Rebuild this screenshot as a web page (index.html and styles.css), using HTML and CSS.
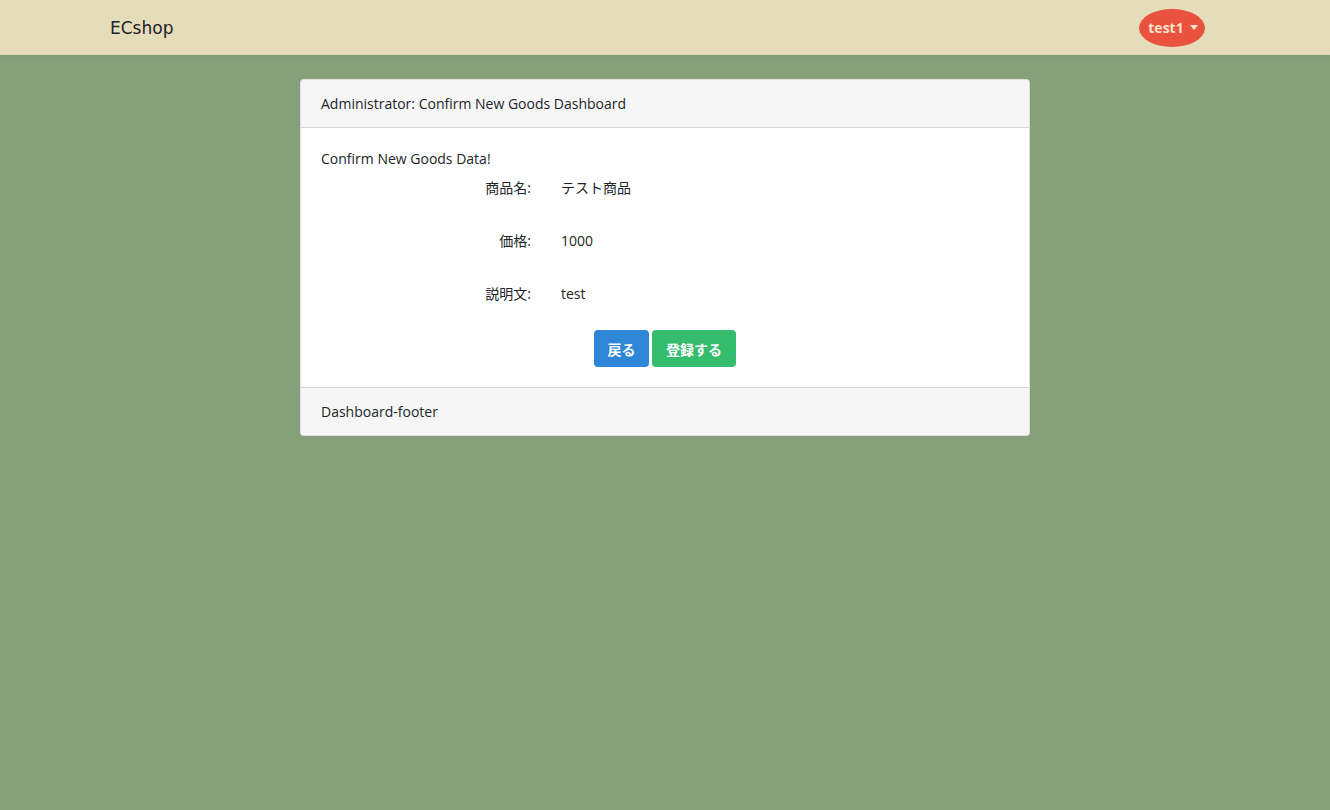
FILE: index.html
```html
<!DOCTYPE html>
<html lang="ja">
<head>
<meta charset="utf-8">
<title>ECshop</title>
<link rel="stylesheet" href="styles.css">
</head>
<body>
<nav class="navbar">
  <div class="container nav-inner">
    <a class="brand" href="#">ECshop</a>
    <button class="user-btn">test1 <span class="caret"></span></button>
  </div>
</nav>
<main class="main">
  <div class="card">
    <div class="card-header">Administrator: Confirm New Goods Dashboard</div>
    <div class="card-body">
      <div class="intro">Confirm New Goods Data!</div>
      <div class="form-row">
        <div class="label">商品名:</div>
        <div class="value">テスト商品</div>
      </div>
      <div class="form-row">
        <div class="label">価格:</div>
        <div class="value">1000</div>
      </div>
      <div class="form-row">
        <div class="label">説明文:</div>
        <div class="value">test</div>
      </div>
      <div class="actions">
        <button class="btn btn-primary">戻る</button>
        <button class="btn btn-success">登録する</button>
      </div>
    </div>
    <div class="card-footer">Dashboard-footer</div>
  </div>
</main>
</body>
</html>
```
FILE: styles.css
```css
* { box-sizing: border-box; }
html, body { margin: 0; padding: 0; }
body {
  background: #85a07b;
  font-family: "Open Sans", "Noto Sans CJK JP", sans-serif;
  font-size: 14px;
  line-height: 23px;
  color: #212529;
  min-height: 810px;
}
.navbar {
  background: #e5dcb9;
  height: 55px;
  box-shadow: 0 2px 4px rgba(0,0,0,0.04);
}
.container {
  max-width: 1140px;
  margin: 0 auto;
  padding: 0 15px;
}
.nav-inner {
  height: 55px;
  display: flex;
  align-items: center;
  justify-content: space-between;
}
.brand {
  font-family: "Comic Sans MS", "DejaVu Sans", sans-serif;
  font-size: 17px;
  color: #212529;
  text-decoration: none;
  margin-top: 2px;
}
.user-btn {
  width: 66px;
  height: 38px;
  border-radius: 50%;
  border: none;
  background: #e9523f;
  color: #f6e3cc;
  font-family: "Open Sans", sans-serif;
  font-size: 14px;
  font-weight: 700;
  display: flex;
  align-items: center;
  justify-content: center;
  gap: 6px;
  padding: 0 0 0 2px;
  margin-right: 15px;
}
.caret {
  width: 0; height: 0;
  border-left: 4px solid transparent;
  border-right: 4px solid transparent;
  border-top: 5px solid #f6e3cc;
}
.main {
  padding-top: 24px;
  display: flex;
  justify-content: center;
}
.card {
  width: 730px;
  background: #fff;
  border: 1px solid rgba(0,0,0,0.125);
  border-radius: 4px;
  overflow: hidden;
}
.card-header, .card-footer {
  background: #f6f6f6;
  padding: 12px 20px;
  height: 48px;
}
.card-header { border-bottom: 1px solid rgba(0,0,0,0.125); }
.card-footer { border-top: 1px solid rgba(0,0,0,0.125); }
.card-body {
  padding: 19px 20px 20px;
}
.form-row {
  display: flex;
  height: 53px;
  padding-top: 6px;
}
.label {
  width: 210px;
  text-align: right;
}
.value {
  margin-left: 30px;
}
.actions {
  display: flex;
  justify-content: center;
  gap: 3px;
  margin-top: 1px;
}
.btn {
  height: 37px;
  border: none;
  border-radius: 4px;
  color: #fff;
  font-family: "Open Sans", "Noto Sans CJK JP", sans-serif;
  font-weight: 700;
  font-size: 14px;
  padding: 0 12px;
}
.btn-primary { background: #2d86d6; width: 55px; }
.btn-success { background: #35bc6d; width: 84px; }
```
